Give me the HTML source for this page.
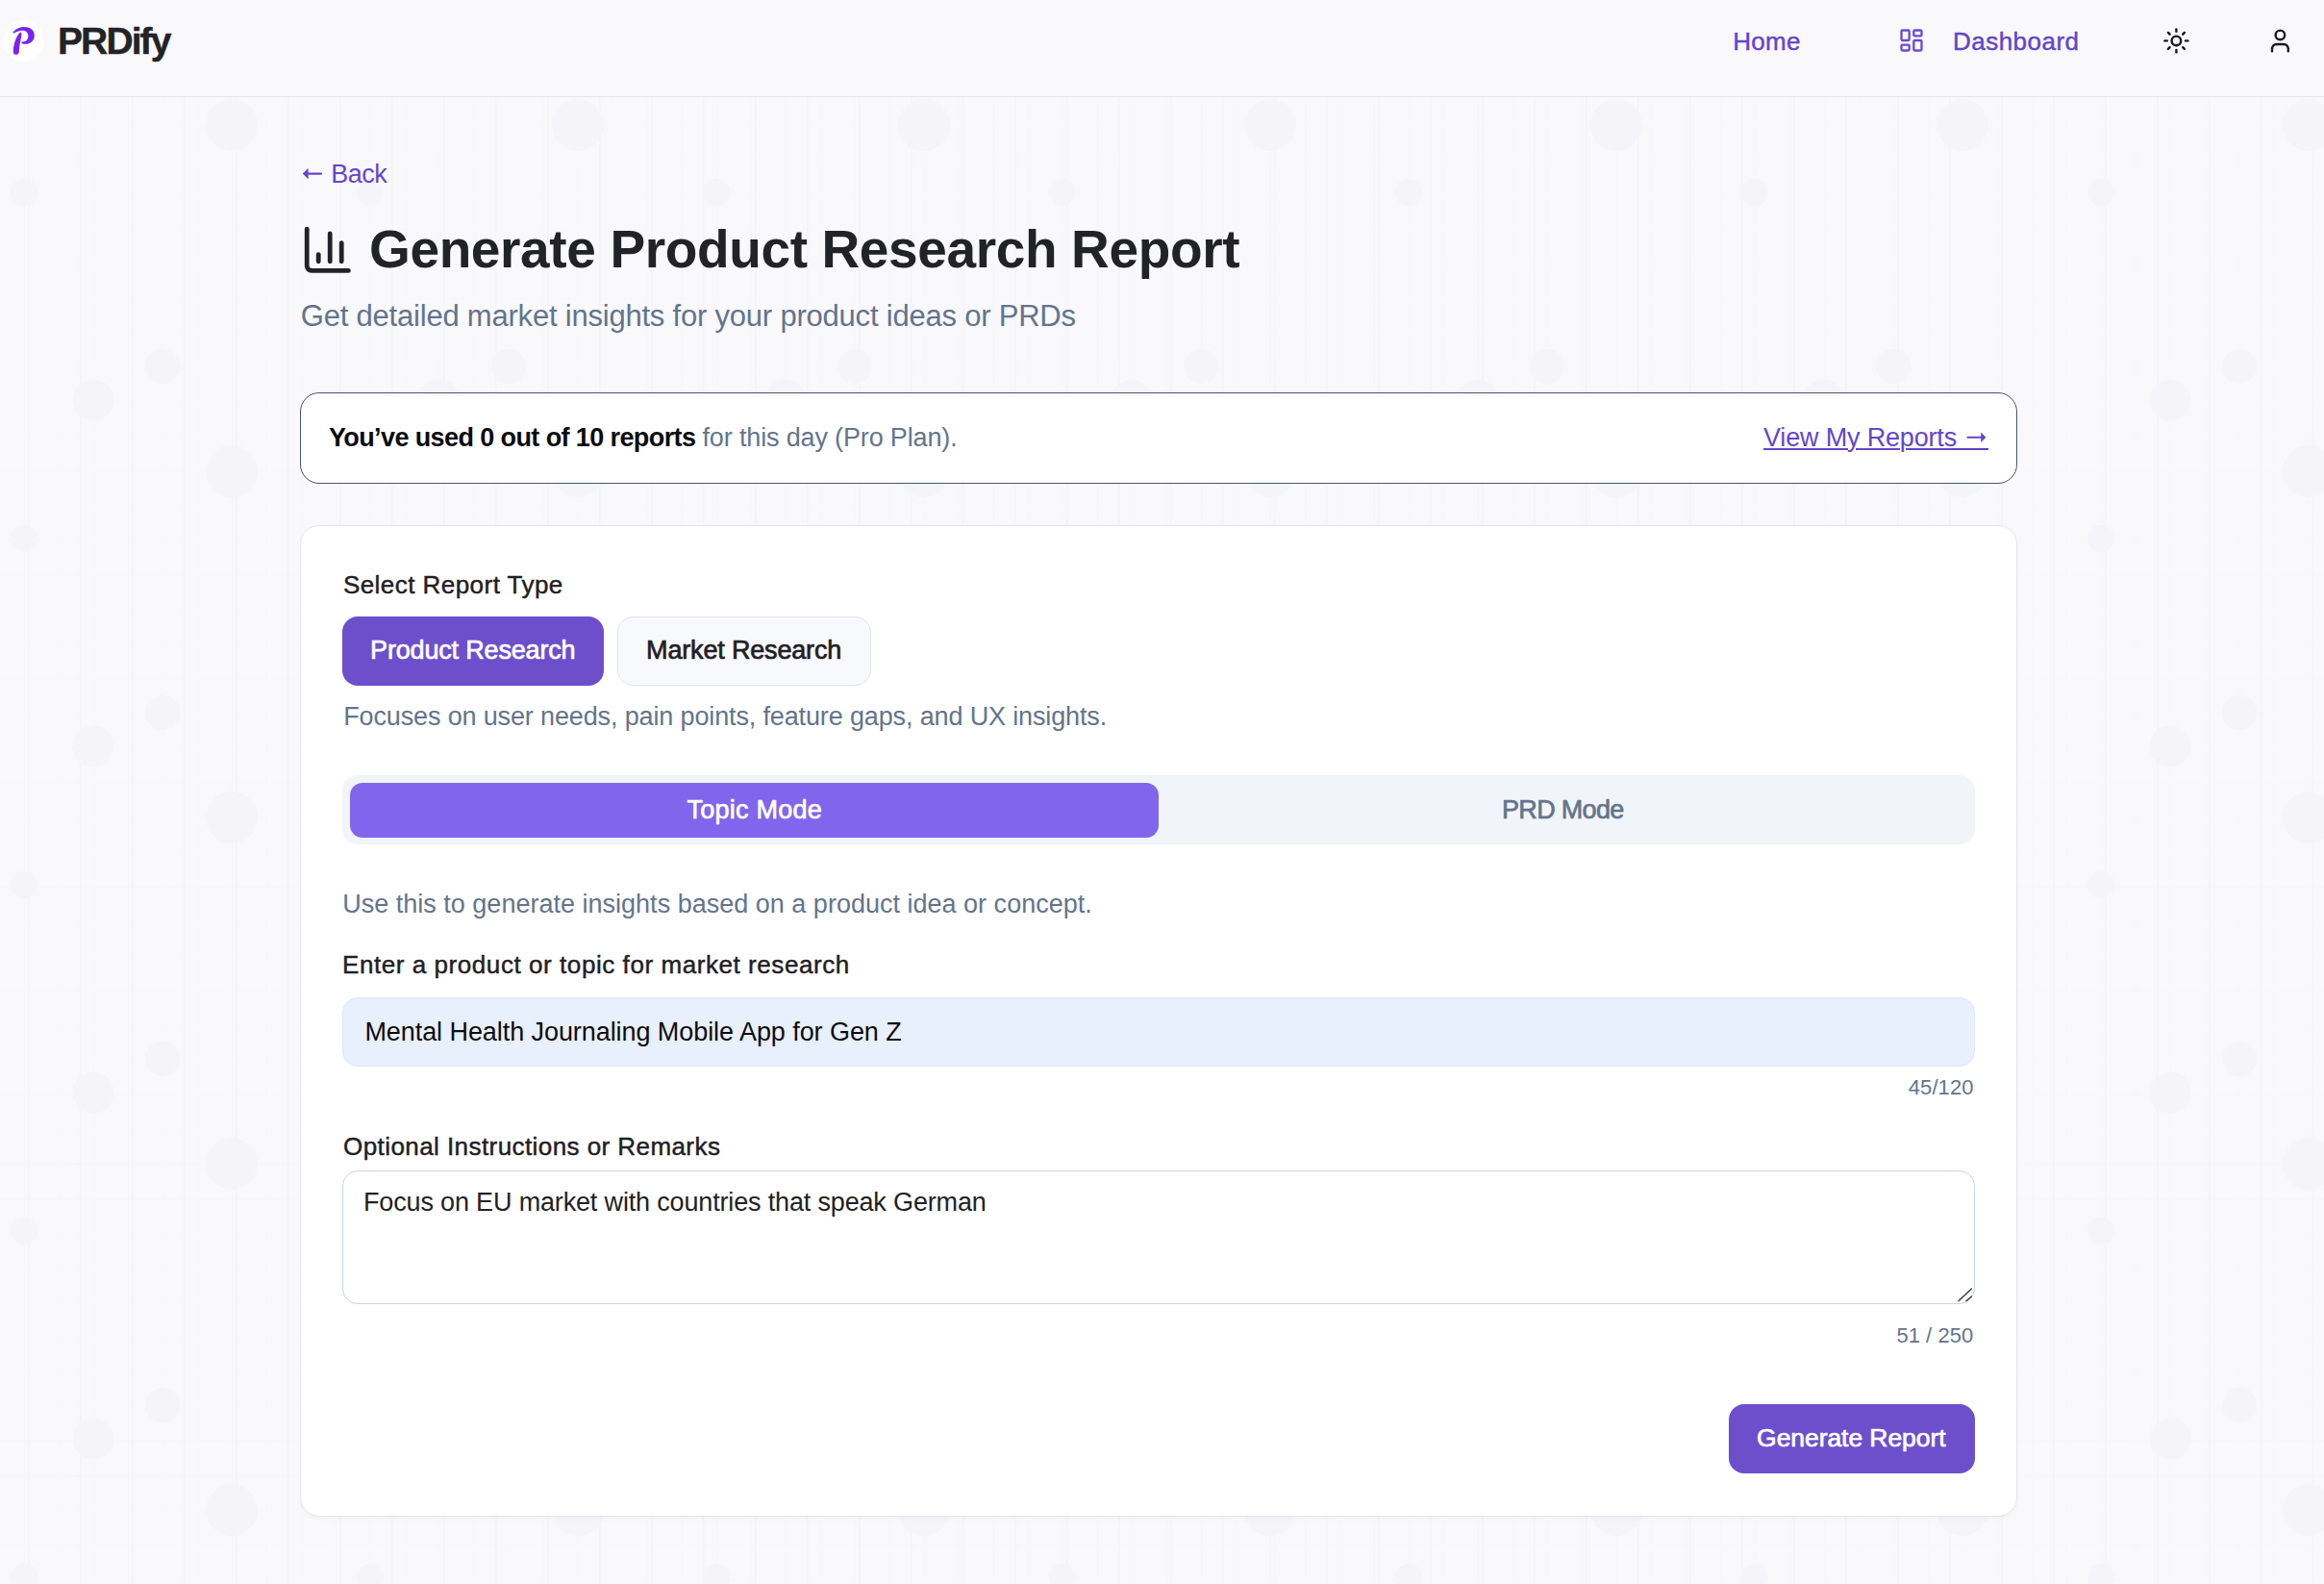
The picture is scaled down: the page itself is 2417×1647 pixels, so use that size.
<!DOCTYPE html>
<html><head><meta charset="utf-8">
<style>
*{box-sizing:border-box;margin:0;padding:0}
html,body{width:2417px;height:1647px;overflow:hidden}
body{position:relative;background:#f9f8fb;font-family:"Liberation Sans",sans-serif;color:#222326}
.t{position:absolute;white-space:nowrap;line-height:1}
.abs{position:absolute}
#bg{position:absolute;left:0;top:0;width:2417px;height:1647px}
header{position:absolute;left:0;top:0;width:2417px;height:101px;background:#f9f8fb;border-bottom:1px solid #e2e6ee}
.card{position:absolute;background:#fff;border-radius:20px}
.btn{position:absolute;border-radius:16px}
.slate{color:#64748b}
.purple{color:#6446c9}
.med{-webkit-text-stroke:0.45px currentColor}
</style></head>
<body>
<svg id="bg" width="2417" height="1647">
  <defs>
    <pattern id="vl" x="29" y="0" width="54" height="36" patternUnits="userSpaceOnUse">
      <rect x="0" y="0" width="1.5" height="36" fill="#f4f3f8"/>
    </pattern>
    <pattern id="g36" x="25" y="22" width="36" height="36" patternUnits="userSpaceOnUse">
      <rect x="0" y="0" width="1.2" height="36" fill="#f7f6fa"/>
      <rect x="0" y="0" width="36" height="1.2" fill="#f7f6fa"/>
    </pattern>
    <pattern id="circ" x="0" y="130" width="360" height="360" patternUnits="userSpaceOnUse">
      <circle cx="241" cy="0" r="27" fill="#f5f4f9"/>
      <circle cx="241" cy="360" r="27" fill="#f5f4f9"/>
      <circle cx="25" cy="70" r="14" fill="#f5f4f9"/>
      <circle cx="169" cy="251" r="18" fill="#f5f4f9"/>
      <circle cx="97" cy="286" r="21.5" fill="#f5f4f9"/>
    </pattern>
  </defs>
  <rect width="2417" height="1647" fill="#f9f8fb"/>
  <rect width="2417" height="1647" fill="url(#g36)"/>
  <rect width="2417" height="1647" fill="url(#vl)"/>
  <rect width="2417" height="1647" fill="url(#circ)"/>
</svg>

<header></header>
<!-- logo -->
<div class="abs" style="left:3px;top:21px;width:43px;height:43px;border-radius:50%;background:#fff"></div>
<svg class="abs" style="left:0px;top:15px" width="60" height="60" viewBox="0 0 1584 1584">
  <path fill="#7a24f2" d="M360 490 C420 400 560 345 650 345 C820 345 945 430 945 580 C945 720 830 815 690 815 C630 815 590 800 590 775 C590 750 620 745 650 745 C730 745 775 680 775 590 C775 490 700 440 610 440 C520 440 440 480 395 510 C370 525 345 515 360 490 Z"/>
  <path fill="#7a24f2" d="M560 490 C590 480 595 530 590 580 C570 720 525 850 525 1000 C525 1080 480 1105 430 1105 C380 1105 365 1070 365 1010 C365 850 430 600 560 490 Z"/>
</svg>
<div class="t" style="left:60px;top:23px;font-size:39px;font-weight:bold;color:#232326;letter-spacing:-1.9px;-webkit-text-stroke:0.4px #232326">PRDify</div>

<div id="home" class="t purple med" style="left:1802.20px;top:29.59px;font-size:26px;letter-spacing:0.334px">Home</div>
<svg class="abs" style="left:1974px;top:28px" width="28" height="28" viewBox="0 0 24 24" fill="none" stroke="#6a4bcc" stroke-width="2" stroke-linecap="round" stroke-linejoin="round"><rect x="3" y="3" width="7" height="9" rx="1"/><rect x="14" y="3" width="7" height="5" rx="1"/><rect x="14" y="12" width="7" height="9" rx="1"/><rect x="3" y="16" width="7" height="5" rx="1"/></svg>
<div id="dash" class="t purple med" style="left:2031.00px;top:29.59px;font-size:26px;letter-spacing:0.475px">Dashboard</div>
<svg class="abs" style="left:2249px;top:28px" width="28.8" height="28.8" viewBox="0 0 24 24" fill="none" stroke="#18181b" stroke-width="2" stroke-linecap="round" stroke-linejoin="round"><circle cx="12" cy="12" r="4"/><path d="M12 2v2"/><path d="M12 20v2"/><path d="m4.93 4.93 1.41 1.41"/><path d="m17.66 17.66 1.41 1.41"/><path d="M2 12h2"/><path d="M20 12h2"/><path d="m6.34 17.66-1.41 1.41"/><path d="m19.07 4.93-1.41 1.41"/></svg>
<svg class="abs" style="left:2356.8px;top:28px" width="28.8" height="28.8" viewBox="0 0 24 24" fill="none" stroke="#18181b" stroke-width="2" stroke-linecap="round" stroke-linejoin="round"><path d="M19 21v-2a4 4 0 0 0-4-4H9a4 4 0 0 0-4 4v2"/><circle cx="12" cy="7" r="4"/></svg>

<!-- back + title -->
<svg class="abs" style="left:310px;top:170px" width="30" height="22" viewBox="310 170 30 22"><path d="M314.7 180.6 L320.6 175 L320.6 186.2 Z" fill="#6446c9"/><path d="M318 180.6 H334" stroke="#6446c9" stroke-width="2.2" stroke-linecap="round"/></svg>
<div id="back" class="t purple" style="left:344.20px;top:168.14px;font-size:27px;letter-spacing:-0.466px">Back</div>
<svg class="abs" style="left:312.1px;top:230.6px" width="57.6" height="57.6" viewBox="0 0 24 24" fill="none" stroke="#222326" stroke-width="2" stroke-linecap="round" stroke-linejoin="round"><path d="M3 3v16a2 2 0 0 0 2 2h16"/><path d="M18 17V9"/><path d="M13 17V5"/><path d="M8 17v-3"/></svg>
<div class="t" style="left:384px;top:231.5px;font-size:55px;font-weight:bold;color:#222326;letter-spacing:-0.37px">Generate Product Research Report</div>
<div id="subtitle" class="t slate" style="left:312.80px;top:312.75px;font-size:31px;letter-spacing:-0.210px">Get detailed market insights for your product ideas or PRDs</div>

<!-- usage card -->
<div class="card" style="left:312px;top:408px;width:1786px;height:95px;border:1.5px solid #475569"></div>
<div id="usage" class="t" style="left:341.90px;top:442.04px;font-size:27px;color:#0b0b0f;letter-spacing:-0.379px"><b style="letter-spacing:-0.6px">You’ve used 0 out of 10 reports</b> <span class="slate" style="letter-spacing:-0.15px">for this day (Pro Plan).</span></div>
<div id="link" class="t purple" style="left:1834.00px;top:442.14px;font-size:27px;letter-spacing:-0.171px;text-decoration:underline;text-decoration-thickness:2px;text-underline-offset:2px">View My Reports</div>
<div class="abs" style="left:2030px;top:466px;width:38px;height:1.9px;background:#5f40c7"></div>
<svg class="abs" style="left:2040px;top:445px" width="30" height="20" viewBox="2040 445 30 20"><path d="M2060.2 449.4 L2065.4 454.8 L2060.2 460 Z" fill="#6446c9"/><path d="M2046.5 454.8 H2061" stroke="#6446c9" stroke-width="2.1" stroke-linecap="round"/></svg>

<!-- form card -->
<div class="card" style="left:312px;top:546px;width:1786px;height:1031px;border:1px solid #e3e7ef;box-shadow:0 2px 5px rgba(30,30,60,0.035)"></div>
<div id="select" class="t med" style="left:356.90px;top:594.59px;font-size:26px;color:#1f2024;letter-spacing:0.454px">Select Report Type</div>
<div class="btn" style="left:356px;top:641px;width:272px;height:71.5px;background:#6d4fcc"></div>
<div id="btn1" class="t" style="left:385.10px;top:663.34px;font-size:27px;color:#fff;-webkit-text-stroke:0.7px #fff;letter-spacing:-0.173px">Product Research</div>
<div class="btn" style="left:642px;top:641px;width:264px;height:71.5px;background:#f8f9fc;border:1px solid #e1e6ef"></div>
<div id="btn2" class="t" style="left:672.10px;top:663.34px;font-size:27px;color:#1f2024;-webkit-text-stroke:0.7px #1f2024;letter-spacing:-0.172px">Market Research</div>
<div id="desc" class="t slate" style="left:357.20px;top:731.94px;font-size:27px;letter-spacing:-0.138px">Focuses on user needs, pain points, feature gaps, and UX insights.</div>

<div class="btn" style="left:356px;top:806px;width:1698px;height:72px;background:#f1f5f9"></div>
<div class="btn" style="left:364px;top:814px;width:841px;height:57px;background:#8165ec;border-radius:13px"></div>
<div id="topic" class="t" style="left:714.50px;top:828.54px;font-size:27px;color:#fff;-webkit-text-stroke:0.7px #fff;letter-spacing:0.245px">Topic Mode</div>
<div id="prd" class="t" style="left:1562.00px;top:828.54px;font-size:27px;color:#64748b;-webkit-text-stroke:0.7px #64748b;letter-spacing:-0.687px">PRD Mode</div>

<div id="use" class="t slate" style="left:356.20px;top:926.94px;font-size:27px;letter-spacing:0.009px">Use this to generate insights based on a product idea or concept.</div>
<div id="label1" class="t med" style="left:356.00px;top:989.79px;font-size:26px;color:#1f2024;letter-spacing:0.565px">Enter a product or topic for market research</div>
<div class="btn" style="left:356px;top:1037px;width:1698px;height:71.5px;background:#e8effd;border:1px solid #dfe6f3"></div>
<div id="input" class="t" style="left:379.40px;top:1060.44px;font-size:27px;color:#0c0c0e;letter-spacing:-0.068px">Mental Health Journaling Mobile App for Gen Z</div>
<div id="count1" class="t slate" style="left:1984.80px;top:1120.47px;font-size:22px;letter-spacing:0.080px">45/120</div>

<div id="label2" class="t med" style="left:357.00px;top:1178.79px;font-size:26px;color:#1f2024;letter-spacing:0.429px">Optional Instructions or Remarks</div>
<div class="btn" style="left:356px;top:1217px;width:1698px;height:139px;background:#fff;border:1.5px solid #cbd5e1"></div>
<div id="tatext" class="t" style="left:378.00px;top:1237.14px;font-size:27px;color:#222;letter-spacing:-0.160px">Focus on EU market with countries that speak German</div>
<svg class="abs" style="left:2034px;top:1337px" width="18" height="18" viewBox="0 0 18 18"><path d="M2.9 15.8 L16.4 2.9 M11 15.8 L16.4 10.9" stroke="#3c3c3c" stroke-width="1.4" stroke-linecap="round"/></svg>
<div id="count2" class="t slate" style="left:1972.50px;top:1378.37px;font-size:22px;letter-spacing:0.014px">51 / 250</div>

<div class="btn" style="left:1798px;top:1460px;width:256px;height:72px;background:#6d4fcc"></div>
<div id="gen" class="t" style="left:1827.10px;top:1481.96px;font-size:26.5px;color:#fff;-webkit-text-stroke:0.7px #fff;letter-spacing:-0.064px">Generate Report</div>
</body></html>
